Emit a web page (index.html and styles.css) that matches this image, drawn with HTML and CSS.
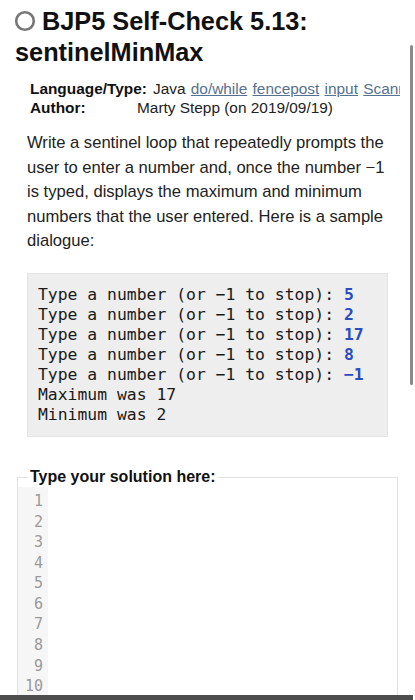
FILE: index.html
```html
<!DOCTYPE html>
<html>
<head>
<meta charset="utf-8">
<link rel="stylesheet" href="styles.css">
</head>
<body>
<div class="page">
  <h2 class="title"><svg class="circle" width="22" height="22" viewBox="0 0 22 22"><circle cx="11" cy="11" r="8.8" fill="none" stroke="#777" stroke-width="2.6"/></svg>BJP5 Self-Check 5.13: sentinelMinMax</h2>
  <div class="content">
    <div class="meta">
      <div class="label">Language/Type:</div>
      <div class="value lang">Java <a href="#">do/while</a> <a href="#">fencepost</a> <a href="#">input</a> <a href="#">Scanner</a></div>
      <div class="label">Author:</div>
      <div class="value">Marty Stepp (on 2019/09/19)</div>
    </div>
    <p class="desc">Write a sentinel loop that repeatedly prompts the user to enter a number and, once the number −1 is typed, displays the maximum and minimum numbers that the user entered. Here is a sample dialogue:</p>
    <pre class="sample">Type a number (or −1 to stop): <b>5</b>
Type a number (or −1 to stop): <b>2</b>
Type a number (or −1 to stop): <b>17</b>
Type a number (or −1 to stop): <b>8</b>
Type a number (or −1 to stop): <b>−1</b>
Maximum was 17
Minimum was 2</pre>
  </div>
  <fieldset class="solution">
    <legend>Type your solution here:</legend>
    <div class="editor">
      <div class="gutter">
        <div>1</div><div>2</div><div>3</div><div>4</div><div>5</div>
        <div>6</div><div>7</div><div>8</div><div>9</div><div>10</div>
      </div>
      <div class="code"></div>
    </div>
  </fieldset>
</div>
<div class="scrollbar"></div>
<div class="bottombar"></div>
</body>
</html>
```
FILE: styles.css
```css
html, body {
  margin: 0;
  padding: 0;
  background: #fff;
}
body {
  font-family: "Liberation Sans", Arial, sans-serif;
  color: #1a1a1a;
  overflow: hidden;
}
.page {
  padding: 0 15px;
}
.title {
  margin: 0;
  padding-top: 6px;
  font-size: 25.3px;
  line-height: 31px;
  font-weight: bold;
  color: #111;
}
.circle {
  vertical-align: -2px;
  margin-right: 6px;
  margin-left: -1px;
}
.content {
  margin: 0 12px;
}
.meta {
  margin-top: 11px;
  margin-right: -12px;
  display: grid;
  grid-template-columns: 107px 1fr;
  font-size: 15.4px;
  line-height: 19px;
  white-space: nowrap;
  overflow: hidden;
  padding-left: 3px;
}
.label {
  font-weight: bold;
  color: #111;
}
.value {
  color: #222;
}
.value.lang {
  padding-left: 16px;
  word-spacing: 1px;
}
.meta a {
  color: #56708f;
  text-decoration: underline;
}
.desc {
  margin: 14px 0 0;
  font-size: 16.6px;
  line-height: 24.5px;
  color: #222;
}
.sample {
  margin: 19px 0 0;
  padding: 11px 10px;
  background: #eeeeee;
  border: 1px solid #e4e4e4;
  font-family: "DejaVu Sans Mono", monospace;
  font-size: 16.4px;
  line-height: 20.1px;
  color: #1a1a1a;
}
.sample b {
  color: #2a4cc0;
}
.solution {
  margin: 30px 2px 0;
  padding: 0;
  border: 1px solid #e2e2e2;
  min-width: 0;
}
.solution legend {
  margin-left: 10px;
  padding: 0 2px;
  font-size: 16px;
  line-height: 20px;
  font-weight: bold;
  color: #111;
}
.editor {
  display: flex;
  height: 280px;
}
.gutter {
  width: 30px;
  background: #f6f6f6;
  padding-top: 4px;
  font-family: "DejaVu Sans Mono", monospace;
  font-size: 15px;
  line-height: 20.55px;
  color: #9a9a9a;
  text-align: right;
  box-sizing: border-box;
  padding-right: 5px;
}
.code {
  flex: 1;
}
.scrollbar {
  position: fixed;
  left: 410px;
  top: 45px;
  width: 3px;
  height: 340px;
  background: #8a8a8a;
  border-radius: 2px;
}
.bottombar {
  position: fixed;
  left: 0;
  bottom: 0;
  width: 413px;
  height: 5px;
  background: #4d4d4d;
}
```
